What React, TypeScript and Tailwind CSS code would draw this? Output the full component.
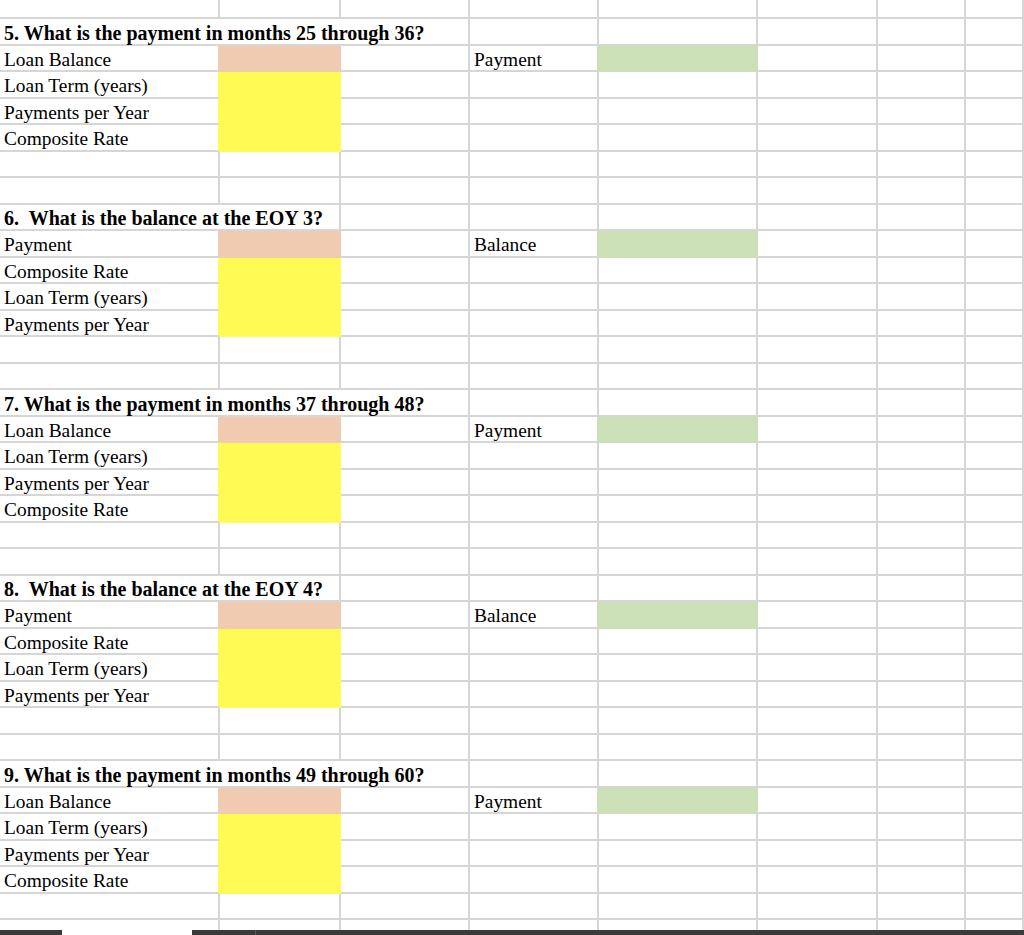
import React from "react";

const GRID = "border-[#d6d6d6]";
const PEACH = "#f1cbb1";
const YELLOW = "#fffb54";
const GREEN = "#cbe0b7";

type CellProps = {
  w: string;
  bg?: string;
  br?: string;
  bb?: string;
  children?: React.ReactNode;
  bold?: boolean;
};

function Cell({ w, bg, br, bb, children, bold }: CellProps) {
  return (
    <div
      className={`${w} shrink-0 h-full border-r-2 border-b-2 ${GRID} flex items-end pl-[4px] pb-[1px] overflow-visible whitespace-pre ${
        bold ? "font-bold text-[20px]" : "text-[19.4px]"
      } leading-none text-black`}
      style={{
        backgroundColor: bg,
        borderRightColor: br,
        borderBottomColor: bb,
      }}
    >
      {children}
    </div>
  );
}

function Tail() {
  return (
    <>
      <Cell w="w-[120px]" />
      <Cell w="w-[88px]" />
      <Cell w="flex-1" />
    </>
  );
}

function Row({ children, h = "h-[26.5px]" }: { children: React.ReactNode; h?: string }) {
  return <div className={`flex shrink-0 ${h} w-full`}>{children}</div>;
}

function BlankRow({ h }: { h?: string }) {
  return (
    <Row h={h}>
      <Cell w="w-[220px]" />
      <Cell w="w-[121px]" />
      <Cell w="w-[129px]" />
      <Cell w="w-[129px]" />
      <Cell w="w-[159px]" />
      <Tail />
    </Row>
  );
}

type SectionProps = {
  title: string;
  wide: boolean;
  labels: string[];
  result: string;
};

function Section({ title, wide, labels, result }: SectionProps) {
  return (
    <>
      <Row>
        {wide ? (
          <Cell w="w-[470px]" bold>
            {title}
          </Cell>
        ) : (
          <>
            <Cell w="w-[341px]" bold>
              {title}
            </Cell>
            <Cell w="w-[129px]" />
          </>
        )}
        <Cell w="w-[129px]" />
        <Cell w="w-[159px]" />
        <Tail />
      </Row>
      <Row>
        <Cell w="w-[220px]" br={PEACH}>
          {labels[0]}
        </Cell>
        <Cell w="w-[121px]" bg={PEACH} br={PEACH} bb={PEACH} />
        <Cell w="w-[129px]" />
        <Cell w="w-[129px]" br={GREEN}>
          {result}
        </Cell>
        <Cell w="w-[159px]" bg={GREEN} br={GREEN} bb={GREEN} />
        <Tail />
      </Row>
      {labels.slice(1).map((l) => (
        <Row key={l}>
          <Cell w="w-[220px]" br={YELLOW}>
            {l}
          </Cell>
          <Cell w="w-[121px]" bg={YELLOW} br={YELLOW} bb={YELLOW} />
          <Cell w="w-[129px]" />
          <Cell w="w-[129px]" />
          <Cell w="w-[159px]" />
          <Tail />
        </Row>
      ))}
      <BlankRow />
      <BlankRow />
    </>
  );
}

const payLabels = ["Loan Balance", "Loan Term (years)", "Payments per Year", "Composite Rate"];
const balLabels = ["Payment", "Composite Rate", "Loan Term (years)", "Payments per Year"];

export default function App() {
  return (
    <div
      className="w-[1024px] h-[935px] bg-white flex flex-col overflow-hidden"
      style={{ fontFamily: '"Liberation Serif", "Times New Roman", serif' }}
    >
      <div className="h-[930px] shrink-0 overflow-hidden flex flex-col">
        <BlankRow h="h-[19px]" />
        <Section title="5. What is the payment in months 25 through 36?" wide labels={payLabels} result="Payment" />
        <Section title="6.  What is the balance at the EOY 3?" wide={false} labels={balLabels} result="Balance" />
        <Section title="7. What is the payment in months 37 through 48?" wide labels={payLabels} result="Payment" />
        <Section title="8.  What is the balance at the EOY 4?" wide={false} labels={balLabels} result="Balance" />
        <Section title="9. What is the payment in months 49 through 60?" wide labels={payLabels} result="Payment" />
      </div>
      <div className="h-[5px] flex shrink-0">
        <div className="w-[62px] bg-[#3a3a3a]" />
        <div className="w-[130px] bg-white" />
        <div className="w-[63px] bg-[#3a3a3a]" />
        <div className="w-px bg-[#5a5a5a]" />
        <div className="flex-1 bg-[#3a3a3a]" />
      </div>
    </div>
  );
}
